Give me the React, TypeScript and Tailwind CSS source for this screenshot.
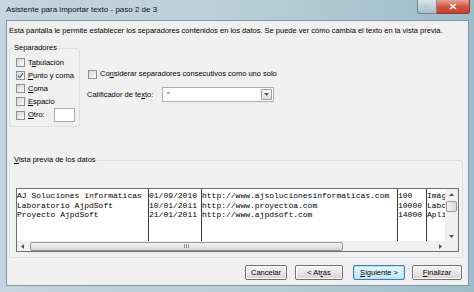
import type { ReactNode } from "react";

const ui = "font-['Liberation_Sans',Arial,sans-serif]";
const mono = "font-['Liberation_Mono','Courier_New',monospace]";

function U({ children }: { children: ReactNode }) {
  return <span className="underline underline-offset-[1px] decoration-[0.5px]">{children}</span>;
}

function Check({ checked = false }: { checked?: boolean }) {
  return (
    <span className="w-[9px] h-[9px] shrink-0 border border-[#8e8f8f] bg-gradient-to-br from-[#d6d6d6] to-[#fbfbfb] flex items-center justify-center">
      {checked && (
        <svg width="7" height="7" viewBox="0 0 7 7">
          <path d="M1 3.6 L2.8 5.6 L6 1" stroke="#3d5573" strokeWidth="1.1" fill="none" />
        </svg>
      )}
    </span>
  );
}

function Arrow({ dir }: { dir: "up" | "down" | "left" | "right" }) {
  const d = {
    up: "M0 3 L2.5 0 L5 3 Z",
    down: "M0 0 L5 0 L2.5 3 Z",
    left: "M3 0 L3 5 L0 2.5 Z",
    right: "M0 0 L3 2.5 L0 5 Z",
  }[dir];
  const v = dir === "up" || dir === "down";
  return (
    <svg width={v ? 5 : 3} height={v ? 3 : 5} viewBox={v ? "0 0 5 3" : "0 0 3 5"}>
      <path d={d} fill="#555" />
    </svg>
  );
}

function Btn({ className, focus, children }: { className: string; focus?: boolean; children: ReactNode }) {
  return (
    <div
      className={`h-[15px] rounded-[2px] border flex items-center justify-center text-[7.5px] leading-none bg-gradient-to-b ${
        focus
          ? "border-[#3c7fb1] from-[#eaf6fd] to-[#bee6fd] shadow-[inset_0_0_0_1px_#b9e2f8]"
          : "border-[#707070] from-[#f3f3f3] via-[#e8e8e8] to-[#d3d3d3] shadow-[inset_0_0_0_1px_#fcfcfc]"
      } ${className}`}
    >
      {children}
    </div>
  );
}

const rows = [
  ["AJ Soluciones informáticas", "01/09/2010", "http://www.ajsolucionesinformaticas.com", "100", "Imág"],
  ["Laboratorio AjpdSoft", "10/01/2011", "http://www.proyectoa.com", "10000", "Labo"],
  ["Proyecto AjpdSoft", "21/01/2011", "http://www.ajpdsoft.com", "14000", "Apli"],
];

const cols = ["w-[132px] border-r", "w-[53px] border-r", "w-[196px] border-r", "w-[29px] border-r", "flex-1"];

export default function App() {
  return (
    <div className={`w-[474px] h-[292px] flex flex-col bg-gradient-to-r from-[#c4d6df] via-[#b8cfd9] to-[#9dbcc9] text-black ${ui}`}>
      <div className="h-[20px] shrink-0 flex items-start">
        <span className="pl-[6px] pt-[5px] text-[8px] leading-[10px] text-[#111]">
          Asistente para importar texto - paso 2 de 3
        </span>
        <div className="ml-auto mr-[4px] flex">
          <div className="w-[20px] h-[14px] border border-[#6d8796] border-t-0 rounded-bl-[3px] bg-gradient-to-b from-[#dbe5ea] to-[#a9bfcb] flex items-center justify-center text-[8px] font-bold text-[#f4f8fa] [text-shadow:0_0_1px_#456]">
            ?
          </div>
          <div className="w-[33px] h-[14px] border border-[#8a3b33] border-t-0 border-l-0 rounded-br-[3px] bg-gradient-to-b from-[#e7a597] via-[#d2553f] to-[#c8402c] flex items-center justify-center">
            <svg width="8" height="7" viewBox="0 0 8 7">
              <path d="M1 1 L7 6 M7 1 L1 6" stroke="#fff" strokeWidth="1.6" />
            </svg>
          </div>
        </div>
      </div>

      <div className="ml-[6px] mr-[5px] h-[266px] bg-[#f0f0f0] border border-[#7e97a3] flex flex-col text-[7.5px]">
        <p className="pl-[2px] pt-[5px] leading-[10px]">
          Esta pantalla le permite establecer los separadores contenidos en los datos. Se puede ver cómo cambia el texto en la vista previa.
        </p>

        <div className="mt-[7px] flex items-start">
          <fieldset className="ml-[2px] w-[71px] border border-[#d5dfe5] rounded-[3px] pl-[6px] pt-[3px] pb-[4px]">
            <legend className="-ml-[3px] px-[1px] leading-[10px]">Separadores</legend>
            {[
              ["T", "a", "bulación", false],
              ["", "P", "unto y coma", true],
              ["", "C", "oma", false],
              ["", "E", "spacio", false],
            ].map(([a, u, b, c]) => (
              <div key={String(u)} className="h-[13px] flex items-center gap-[3px]">
                <Check checked={Boolean(c)} />
                <span className="leading-none">
                  {a}
                  <U>{u}</U>
                  {b}
                </span>
              </div>
            ))}
            <div className="h-[14px] flex items-center gap-[3px]">
              <Check />
              <span className="w-[23px] leading-none">
                <U>O</U>tro:
              </span>
              <span className="w-[21px] h-[14px] bg-white border border-[#abadb3]" />
            </div>
          </fieldset>

          <div className="ml-[7px] flex flex-col">
            <div className="mt-[25px] h-[12px] pl-[1px] flex items-center gap-[3px]">
              <Check />
              <span className="leading-none">
                Co<U>n</U>siderar separadores consecutivos como uno solo
              </span>
            </div>
            <div className="mt-[7px] h-[15px] flex items-center">
              <span className="w-[75px] leading-none">
                Calificador de te<U>x</U>to:
              </span>
              <div className="w-[112px] h-[15px] bg-white border border-[#abadb3] flex items-center">
                <span className="pl-[4px] flex-1 leading-none">"</span>
                <span className="w-[11px] h-[11px] mr-[1px] border border-[#9aa0a6] rounded-[1px] bg-gradient-to-b from-[#f7f7f7] to-[#dcdcdc] flex items-center justify-center">
                  <Arrow dir="down" />
                </span>
              </div>
            </div>
          </div>
        </div>

        <fieldset className="mt-[28px] ml-[2px] w-[454px] border border-[#d5dfe5] rounded-[3px] pl-[6px] pb-[5px]">
          <legend className="-ml-[3px] px-[1px] leading-[10px]">
            <U>V</U>ista previa de los datos
          </legend>
          <div className="mt-[23px] w-[443px] h-[64px] border border-[#707070] bg-white flex flex-col">
            <div className="h-[52px] flex">
              <div className={`w-[428px] h-full flex overflow-hidden text-[8px] leading-[9.5px] ${mono}`}>
                {cols.map((c, i) => (
                  <div key={i} className={`${c} h-full shrink-0 border-[#3a3a3a] pt-[2px] whitespace-pre overflow-hidden`}>
                    {rows.map((r) => (
                      <div key={r[0]}>{r[i]}</div>
                    ))}
                  </div>
                ))}
              </div>
              <div className="w-[13px] h-full bg-[#f0f0f0] flex flex-col items-center">
                <div className="h-[10px] flex items-center">
                  <Arrow dir="up" />
                </div>
                <div className="mt-[2px] w-[11px] h-[11px] rounded-[2px] border border-[#979797] bg-gradient-to-r from-[#f4f4f4] to-[#dadada]" />
                <div className="flex-1" />
                <div className="h-[10px] flex items-center">
                  <Arrow dir="down" />
                </div>
              </div>
            </div>
            <div className="h-[10px] flex bg-[#f0f0f0]">
              <div className="w-[10px] flex items-center justify-center">
                <Arrow dir="left" />
              </div>
              <div className="ml-[3px] w-[313px] h-[9px] mt-[0.5px] rounded-[2px] border border-[#979797] bg-gradient-to-b from-[#f5f5f5] to-[#d6d6d6] flex items-center justify-center gap-[1px]">
                <span className="w-[1px] h-[4px] bg-[#8a8a8a]" />
                <span className="w-[1px] h-[4px] bg-[#8a8a8a]" />
                <span className="w-[1px] h-[4px] bg-[#8a8a8a]" />
              </div>
              <div className="flex-1" />
              <div className="w-[10px] flex items-center justify-center">
                <Arrow dir="right" />
              </div>
              <div className="w-[13px]" />
            </div>
          </div>
        </fieldset>

        <div className="mt-[7px] pr-[6px] flex justify-end">
          <Btn className="w-[42px]">Cancelar</Btn>
          <Btn className="ml-[8px] w-[48px]">
            &lt; At<U>r</U>ás
          </Btn>
          <Btn className="ml-[10px] w-[52px]" focus>
            <U>S</U>iguiente &gt;
          </Btn>
          <Btn className="ml-[7px] w-[50px]">
            <U>F</U>inalizar
          </Btn>
        </div>
      </div>
    </div>
  );
}
